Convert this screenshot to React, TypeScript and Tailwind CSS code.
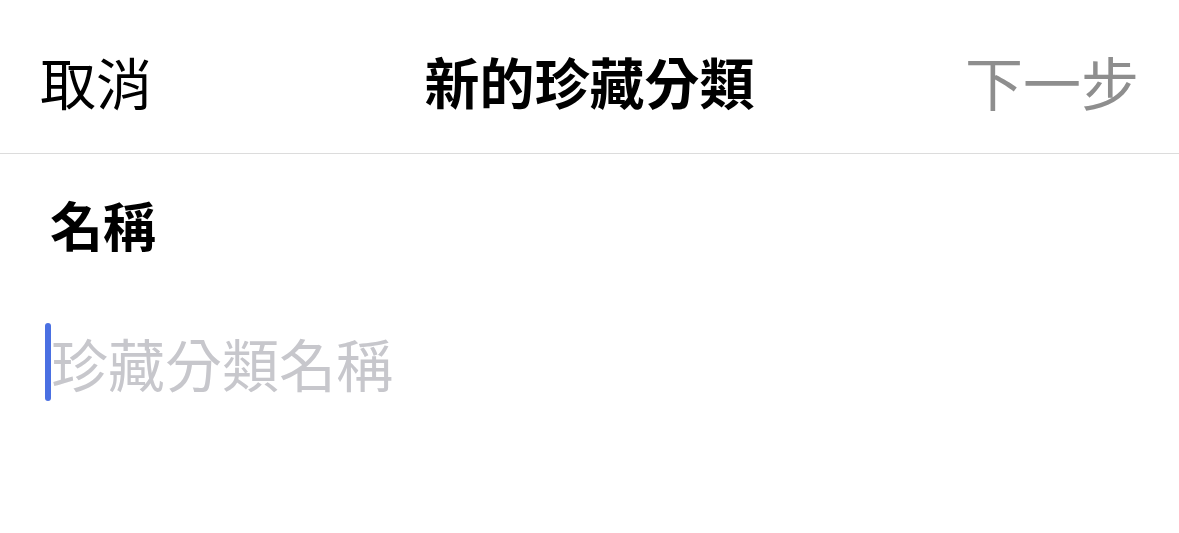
export default function App() {
  return (
    <div
      className="w-[1179px] h-[533px] bg-white overflow-hidden"
      style={{ fontFamily: '"Noto Sans CJK TC", "Noto Sans CJK SC", sans-serif' }}
    >
      {/* Nav bar */}
      <header className="grid grid-cols-[1fr_auto_1fr] items-center h-[154px] pt-[8px] px-[40px] border-b border-[#dcdcdc]">
        <button className="justify-self-start text-[56px] leading-none text-black">取消</button>
        <h1 className="text-[55px] leading-none font-bold text-black">新的珍藏分類</h1>
        <button className="justify-self-end text-[58px] leading-none text-[#8e8e8e]">下一步</button>
      </header>

      {/* Form */}
      <div className="pl-[50px] pt-[44px]">
        <div className="text-[53px] leading-none font-bold text-black">名稱</div>
        <div className="flex items-center mt-[72px] -ml-[5px]">
          <span className="w-[6px] h-[78px] rounded-full bg-[#4a70e2]" />
          <span className="text-[57px] leading-none text-[#c7c7cc]">珍藏分類名稱</span>
        </div>
      </div>
    </div>
  );
}
